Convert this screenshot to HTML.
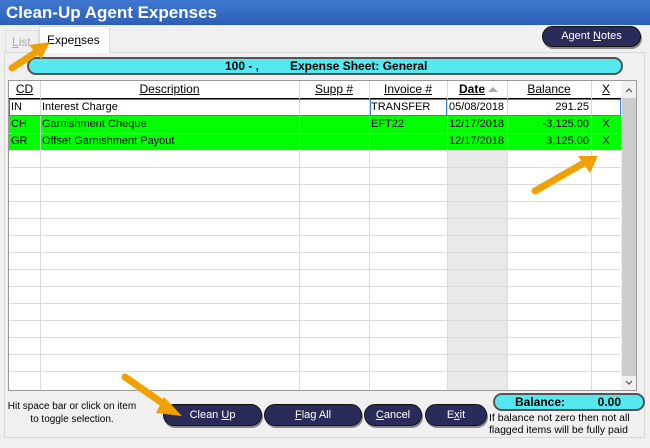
<!DOCTYPE html>
<html><head><style>
*{margin:0;padding:0;box-sizing:border-box}
body{width:650px;height:448px;overflow:hidden;background:#f0f0f0;font-family:"Liberation Sans",Arial,sans-serif;font-size:11px;position:relative;color:#000}
.abs{position:absolute}
.title{left:0;top:0;width:650px;height:25px;background:linear-gradient(#3f78d0,#2c5fb8);color:#fff;font-weight:bold;font-size:17px;padding:3px 0 0 6px}
.tab{top:26px;height:27px;font-size:12px}
.btn{background:#2b2b5a;color:#fff;border-radius:11px;text-align:center;font-size:11px;box-shadow:1px 2px 0 #888;border:1px solid #111}
.cell{position:absolute;height:17px;line-height:17px;overflow:hidden;white-space:nowrap;padding:0 2px}
</style></head><body>
<div class="abs title">Clean-Up Agent Expenses</div>
<div class="abs" style="left:4px;top:52px;width:641px;height:386px;border:1px solid #d8d8d8;background:#f0f0f0"></div>
<div class="abs tab" style="left:5px;top:30px;width:34px;height:22px;color:#aaa;padding:4px 0 0 6px;border:1px solid #ddd;border-bottom:none"><u>L</u>ist</div>
<div class="abs tab" style="left:39px;top:26px;width:71px;height:27px;background:#fff;border:1px solid #ddd;border-bottom:none;padding:6px 0 0 7px">Expe<u>n</u>ses</div>
<div class="abs btn" style="left:542px;top:26px;width:99px;height:21px;line-height:18px;border-radius:11px">Agent <u>N</u>otes</div>
<div class="abs" style="left:27px;top:57px;width:596px;height:18px;background:#55e8ee;border:2px solid #555;border-radius:9px;font-weight:bold;font-size:12px;line-height:14px"><span style="position:absolute;left:196px">100 - ,</span><span style="position:absolute;left:261px">Expense Sheet: General</span></div>
<div class="abs" style="left:8px;top:80px;width:629px;height:311px;background:#fff;border:1px solid #999;overflow:hidden">
<svg width="629" height="311" style="position:absolute;left:0;top:0">
<rect x="438" y="69" width="60" height="242" fill="#e9e9e9"/>
<rect x="0" y="35" width="612" height="34" fill="#00ff00"/>
<g stroke="#dcdcdc">
<line x1="0" y1="17.5" x2="612" y2="17.5" stroke="#000"/>
<line x1="0" y1="52.5" x2="612" y2="52.5"/>
<line x1="0" y1="69.5" x2="612" y2="69.5"/><line x1="0" y1="86.5" x2="612" y2="86.5"/><line x1="0" y1="103.5" x2="612" y2="103.5"/><line x1="0" y1="120.5" x2="612" y2="120.5"/><line x1="0" y1="137.5" x2="612" y2="137.5"/><line x1="0" y1="154.5" x2="612" y2="154.5"/><line x1="0" y1="171.5" x2="612" y2="171.5"/><line x1="0" y1="188.5" x2="612" y2="188.5"/><line x1="0" y1="205.5" x2="612" y2="205.5"/><line x1="0" y1="222.5" x2="612" y2="222.5"/><line x1="0" y1="239.5" x2="612" y2="239.5"/><line x1="0" y1="256.5" x2="612" y2="256.5"/><line x1="0" y1="273.5" x2="612" y2="273.5"/><line x1="0" y1="290.5" x2="612" y2="290.5"/>
<line x1="31.5" y1="0" x2="31.5" y2="311"/><line x1="290.5" y1="0" x2="290.5" y2="311"/><line x1="360.5" y1="0" x2="360.5" y2="311"/><line x1="438.5" y1="0" x2="438.5" y2="311"/><line x1="498.5" y1="0" x2="498.5" y2="311"/><line x1="582.5" y1="0" x2="582.5" y2="311"/>
</g>
<rect x="0.5" y="18.5" width="611" height="16" fill="none" stroke="#3a7fd0"/>
<rect x="361.5" y="18.5" width="76" height="16" fill="none" stroke="#3a7fd0"/>
<rect x="612" y="0" width="17" height="311" fill="#f0f0f0"/>
<rect x="613" y="17" width="15" height="278" fill="#cdcdcd"/>
<polyline points="617,11 620,8 623,11" fill="none" stroke="#555" stroke-width="1.2"/>
<polyline points="617,300 620,303 623,300" fill="none" stroke="#555" stroke-width="1.2"/>
<polygon points="479,11 484,6 489,11" fill="#aaa"/>
</svg>
<div class="cell" style="left:0;top:0;width:31px;text-align:center;font-size:12px"><u>CD</u></div>
<div class="cell" style="left:31px;top:0;width:259px;text-align:center;font-size:12px"><u>Description</u></div>
<div class="cell" style="left:290px;top:0;width:70px;text-align:center;font-size:12px"><u>Supp #</u></div>
<div class="cell" style="left:360px;top:0;width:78px;text-align:center;font-size:12px"><u>Invoice #</u></div>
<div class="cell" style="left:438px;top:0;width:50px;text-align:center;font-size:12px;font-weight:bold"><u>Date</u></div>
<div class="cell" style="left:498px;top:0;width:84px;text-align:center;font-size:12px"><u>Balance</u></div>
<div class="cell" style="left:582px;top:0;width:30px;text-align:center;font-size:12px"><u>X</u></div>
<div class="cell" style="left:0;top:18px">IN</div><div class="cell" style="left:31px;top:18px">Interest Charge</div><div class="cell" style="left:360px;top:18px">TRANSFER</div><div class="cell" style="left:438px;top:18px">05/08/2018</div><div class="cell" style="left:498px;top:18px;width:84px;text-align:right">291.25</div>
<div class="cell" style="left:0;top:35px">CH</div><div class="cell" style="left:31px;top:35px">Garnishment Cheque</div><div class="cell" style="left:360px;top:35px">EFT22</div><div class="cell" style="left:438px;top:35px">12/17/2018</div><div class="cell" style="left:498px;top:35px;width:84px;text-align:right">-3,125.00</div><div class="cell" style="left:582px;top:35px;width:30px;text-align:center">X</div>
<div class="cell" style="left:0;top:52px">GR</div><div class="cell" style="left:31px;top:52px">Offset Garnishment Payout</div><div class="cell" style="left:438px;top:52px">12/17/2018</div><div class="cell" style="left:498px;top:52px;width:84px;text-align:right">3,125.00</div><div class="cell" style="left:582px;top:52px;width:30px;text-align:center">X</div>
</div>
<div class="abs" style="left:4px;top:400px;width:136px;text-align:center;font-size:10px;line-height:13px;white-space:nowrap">Hit space bar or click on item<br>to toggle selection.</div>
<div class="abs btn" style="left:163px;top:404px;width:99px;height:22px;line-height:20px">Clean <u>U</u>p</div>
<div class="abs btn" style="left:264px;top:404px;width:98px;height:22px;line-height:20px"><u>F</u>lag All</div>
<div class="abs btn" style="left:364px;top:404px;width:58px;height:22px;line-height:20px"><u>C</u>ancel</div>
<div class="abs btn" style="left:425px;top:404px;width:62px;height:22px;line-height:20px">E<u>x</u>it</div>
<div class="abs" style="left:493px;top:393px;width:152px;height:18px;background:#55e8ee;border:2px solid #555;border-radius:9px;font-weight:bold;font-size:12px;line-height:14px"><span style="position:absolute;left:20px">Balance:</span><span style="position:absolute;right:22px">0.00</span></div>
<div class="abs" style="left:489px;top:412px;width:158px;font-size:10.5px;line-height:12px">If balance not zero then not all flagged items will be fully paid</div>
<svg class="abs" style="left:0;top:0" width="650" height="448">
<g stroke="#f0a000" stroke-width="7" stroke-linecap="round" fill="#f0a000">
<line x1="12" y1="68" x2="38" y2="51"/>
<line x1="535" y1="191" x2="582" y2="164"/>
<line x1="125" y1="377" x2="168" y2="407"/>
</g>
<g fill="#f0a000">
<polygon points="50,42 29,45 41,59"/>
<polygon points="598,156 578,156 590,173"/>
<polygon points="182,416 164,397 156,413"/>
</g>
</svg>
</body></html>
